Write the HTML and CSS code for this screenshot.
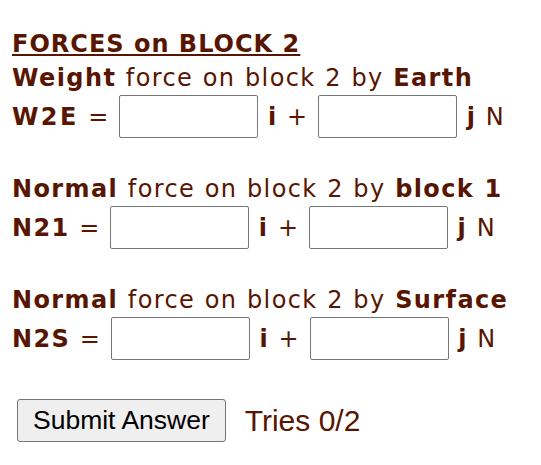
FILE: index.html
```html
<!DOCTYPE html>
<html>
<head>
<meta charset="utf-8">
<link rel="stylesheet" href="styles.css">
</head>
<body>
<div class="page">
  <div class="title">FORCES on BLOCK 2</div>
  <div class="line"><b>Weight</b> force on block 2 by <b>Earth</b></div>
  <div class="line"><b class="wide">W2E</b> = <input class="field" type="text"> <b>i</b> + <input class="field" type="text"> <b>j</b> N</div>
  <div class="line blank"></div>
  <div class="line"><b>Normal</b> force on block 2 by <b>block 1</b></div>
  <div class="line"><b>N21</b> = <input class="field" type="text"> <b>i</b> + <input class="field" type="text"> <b>j</b> N</div>
  <div class="line blank"></div>
  <div class="line"><b>Normal</b> force on block 2 by <b>Surface</b></div>
  <div class="line"><b>N2S</b> = <input class="field" type="text"> <b>i</b> + <input class="field" type="text"> <b>j</b> N</div>
  <div class="actions">
    <button class="submit" type="button">Submit Answer</button>
    <span class="tries">Tries 0/2</span>
  </div>
</div>
</body>
</html>
```
FILE: styles.css
```css
html, body {
  margin: 0;
  padding: 0;
  background: #ffffff;
}
.page {
  padding: 27px 0 0 12px;
  font-family: "DejaVu Sans", Verdana, sans-serif;
  font-size: 24px;
  color: #581500;
}
.title {
  font-weight: bold;
  text-decoration: underline;
  line-height: 34px;
  letter-spacing: 1px;
}
.line {
  line-height: 34px;
  white-space: nowrap;
  letter-spacing: 1.4px;
  word-spacing: 0.5px;
}
.wide {
  letter-spacing: 2.4px;
}
.blank {
  height: 34px;
}
.field {
  box-sizing: border-box;
  width: 139px;
  height: 43px;
  margin: 0;
  padding: 0 4px;
  border: 1px solid #767676;
  border-radius: 2px;
  font-family: "DejaVu Sans", sans-serif;
  font-size: 24px;
  vertical-align: baseline;
  background: #ffffff;
}
.actions {
  display: flex;
  align-items: center;
  margin-top: 39px;
}
.submit {
  box-sizing: border-box;
  height: 43px;
  margin: 0 0 0 5px;
  padding: 0 15px;
  border: 1px solid #767676;
  border-radius: 3px;
  background: #efefef;
  color: #000000;
  font-family: "Liberation Sans", Arial, sans-serif;
  font-size: 26.5px;
}
.tries {
  margin-left: 19px;
  font-family: "Liberation Sans", Arial, sans-serif;
  font-size: 30px;
}
```
